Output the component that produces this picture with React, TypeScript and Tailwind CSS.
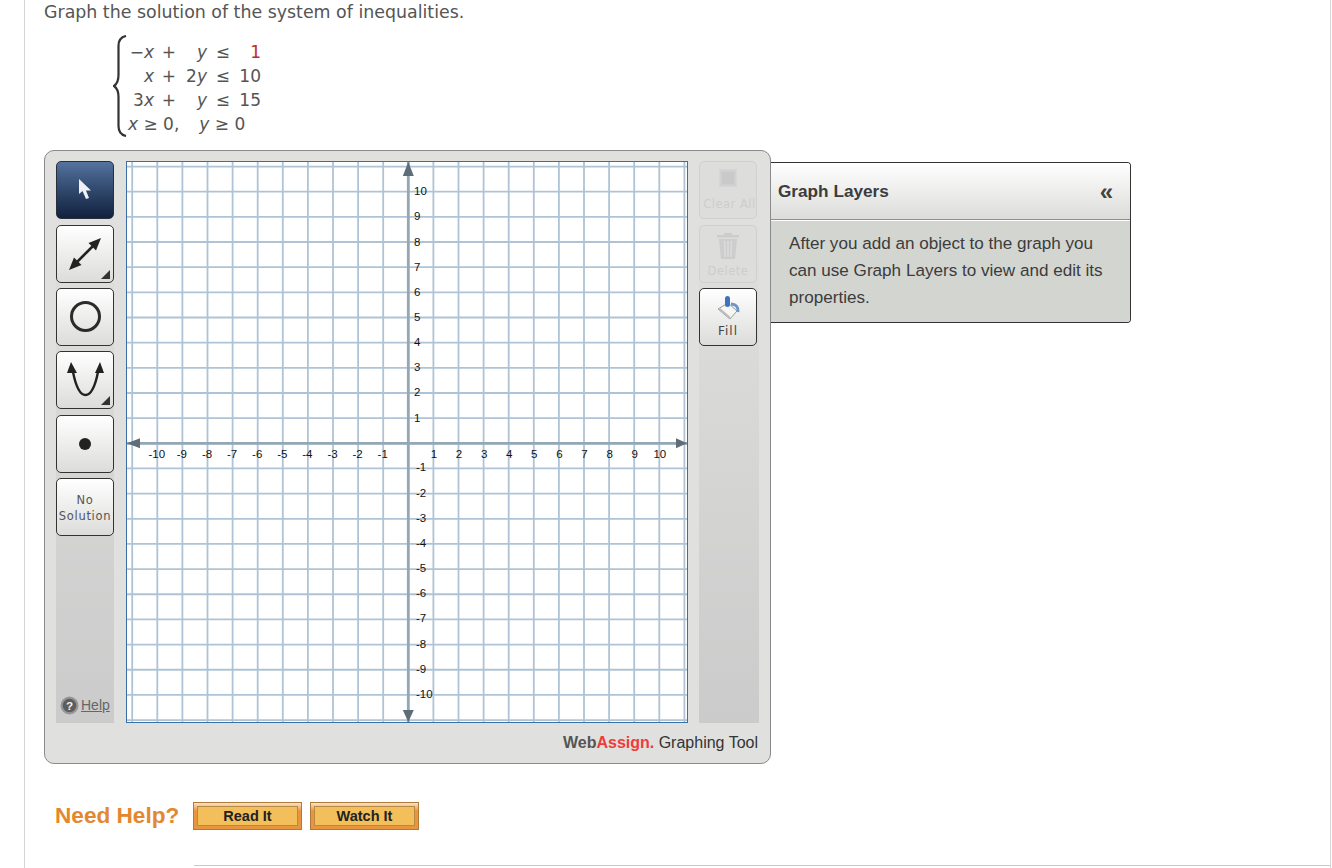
import React from "react";

const OX = 282.3;
const OY = 282.3;
const STEP_X = 25.1;
const STEP_Y = 25.16;
const range = Array.from({ length: 23 }, (_, i) => i - 11);
const labels = range.filter((n) => n !== 0 && Math.abs(n) <= 10);

function Graph() {
  return (
    <svg width={562} height={562} viewBox="0 0 562 562" className="block bg-white font-['Liberation_Sans',sans-serif]">
      {range.map((n) => (
        <g key={n} stroke="#aec3d5" strokeWidth={1.8}>
          <line x1={OX + n * STEP_X} x2={OX + n * STEP_X} y1={0} y2={562} />
          <line y1={OY - n * STEP_Y} y2={OY - n * STEP_Y} x1={0} x2={562} />
        </g>
      ))}
      <line x1={OX} x2={OX} y1={0} y2={562} stroke="#93a7b5" strokeWidth={2.8} />
      <line y1={OY} y2={OY} x1={0} x2={562} stroke="#93a7b5" strokeWidth={2.8} />
      <polygon points={`${OX},1 ${OX - 5.5},15 ${OX + 5.5},15`} fill="#5f6d78" />
      <polygon points={`${OX},561 ${OX - 5.5},549 ${OX + 5.5},549`} fill="#5f6d78" />
      <polygon points={`1,${OY} 14,${OY - 5} 14,${OY + 5}`} fill="#5f6d78" />
      <polygon points={`561,${OY} 550,${OY - 5} 550,${OY + 5}`} fill="#5f6d78" />
      <rect x={0.5} y={0.5} width={561} height={561} fill="none" stroke="#3b6ea5" />
      {labels.map((n) => (
        <text key={`x${n}`} x={OX + n * STEP_X + (n < 0 ? -0.5 : 0.5)} y={296.5} textAnchor="middle" fontSize={11.5} fill="#111">
          {n}
        </text>
      ))}
      {labels.map((n) => (
        <text key={`y${n}`} x={n > 0 ? 288 : 290} y={OY - n * STEP_Y + (n > 0 ? 3.5 : 3)} fontSize={11.5} fill="#111">
          {n}
        </text>
      ))}
    </svg>
  );
}

function Corner() {
  return (
    <svg width={9} height={9} viewBox="0 0 9 9" className="absolute right-[3px] bottom-[3px]">
      <polygon points="9,0 9,9 0,9" fill="#333" />
    </svg>
  );
}

function Tool({ children, active, dim, corner }: { children: React.ReactNode; active?: boolean; dim?: boolean; corner?: boolean }) {
  const look = active
    ? "border-[#2a2f3a] bg-gradient-to-b from-[#54739f] to-[#11223f]"
    : dim
      ? "border-[#d0d0d0] bg-[#dddddb]"
      : "border-[#333] bg-gradient-to-b from-white to-[#dcdcda]";
  return (
    <div className={`relative flex h-[58px] w-[58px] shrink-0 flex-col items-center justify-center rounded-[5px] border ${look}`}>
      {children}
      {corner && <Corner />}
    </div>
  );
}

function LineIcon() {
  return (
    <svg width={36} height={36} viewBox="0 0 36 36">
      <line x1={7} y1={29} x2={29} y2={7} stroke="#222" strokeWidth={2.6} />
      <polygon points="34,2 29,14.5 21.5,7" fill="#222" />
      <polygon points="2,34 7,21.5 14.5,29" fill="#222" />
    </svg>
  );
}

function ParabolaIcon() {
  return (
    <svg width={38} height={38} viewBox="0 0 38 38">
      <path d="M7 11 C10 26 14 34 19.5 34 C25 34 29 26 32 11" fill="none" stroke="#222" strokeWidth={2.4} />
      <polygon points="5,1 1,12 11,12" fill="#222" />
      <polygon points="34,1 29,12 38,12" fill="#222" />
    </svg>
  );
}

function Cursor() {
  return (
    <svg width={14} height={22} viewBox="0 0 14 22" className="mb-[3px]">
      <polygon points="1,1 1,16 4.5,13 8,21 11,20 8,12.5 13,12.5" fill="#eef2f7" />
    </svg>
  );
}

function ClearIcon() {
  return (
    <svg width={18} height={18} viewBox="0 0 18 18">
      <rect x={0.5} y={0.5} width={17} height={17} fill="#cfcfcf" stroke="#d6d6d6" strokeWidth={1.5} />
      <rect x={3} y={3} width={12} height={12} fill="#c9c9c9" />
    </svg>
  );
}

function TrashIcon() {
  return (
    <svg width={22} height={26} viewBox="0 0 22 26" className="mt-[4px]">
      <rect x={0} y={2} width={22} height={2.5} fill="#cdcdcd" />
      <rect x={7} y={0} width={8} height={2.5} fill="#cdcdcd" />
      <path d="M2 6 H20 L18 26 H4 Z" fill="#cdcdcd" />
      <path d="M7.5 8 L8.2 24 M11 8 V24 M14.5 8 L13.8 24" stroke="#dddddb" strokeWidth={1.4} />
    </svg>
  );
}

function FillIcon() {
  return (
    <svg width={24} height={24} viewBox="0 0 24 24">
      <polygon points="2,13 12,7 21,15 14,23" fill="#f6f6f4" stroke="#9a9a9a" strokeWidth={1} />
      <polygon points="2,13 14,23 14,20.5 4,12" fill="#bdbdbd" />
      <rect x={9} y={0} width={5} height={11} rx={2.5} fill="#3f73bd" />
      <path d="M15 8 C20 8 22.5 11 22 16" fill="none" stroke="#6d96c6" strokeWidth={3} />
    </svg>
  );
}

function HelpIcon() {
  return (
    <svg width={19} height={19} viewBox="0 0 18 18" className="-ml-[1px]">
      <circle cx={9} cy={9} r={8.5} fill="#959595" />
      <circle cx={9} cy={9} r={6.4} fill="#5d5d5d" />
      <text x={9} y={13} textAnchor="middle" fontSize={11} fontWeight={700} fill="#f2f2f2" className="font-['Liberation_Sans',sans-serif]">?</text>
    </svg>
  );
}

function Orange({ label }: { label: string }) {
  return (
    <div className="h-[28px] w-[109px] border border-[#ad7a3a] bg-gradient-to-b from-[#fbe3c6] from-0% to-[#e8953e] to-30% p-[3px]">
      <div className="flex h-full w-full items-center justify-center border border-[#b98a45] bg-[#f2bf5b] pt-[2px] font-['Liberation_Sans',sans-serif] text-[14.5px] font-bold text-[#222]">
        {label}
      </div>
    </div>
  );
}

function Brace() {
  return (
    <svg width={18} height={102} viewBox="0 0 18 102" className="shrink-0">
      <path d="M13 1 C8 2 5.5 5 5.5 11 L5.5 40 C5.5 46 4 49 1 51 C4 53 5.5 56 5.5 62 L5.5 91 C5.5 97 8 100 13 101" fill="none" stroke="#333" strokeWidth={2.2} />
    </svg>
  );
}

const V = ({ children }: { children: React.ReactNode }) => <i className="italic">{children}</i>;

function Equations() {
  const cell = "h-[24px] leading-[24px] text-right";
  return (
    <div className="ml-[69px] mt-[13px] flex h-[102px] items-start font-['DejaVu_Sans',sans-serif] text-[17px] text-[#555]">
      <Brace />
      <div className="-ml-[4px] mt-[5px] grid grid-cols-[27px_29px_24px_23px_31px]">
        <div className={cell}>−<V>x</V></div>
        <div className={`${cell} pr-[7px]`}>+</div>
        <div className={cell}><V>y</V></div>
        <div className={cell}>≤</div>
        <div className={`${cell} text-[#c4281c]`}>1</div>

        <div className={cell}><V>x</V></div>
        <div className={`${cell} pr-[7px]`}>+</div>
        <div className={cell}>2<V>y</V></div>
        <div className={cell}>≤</div>
        <div className={cell}>10</div>

        <div className={cell}>3<V>x</V></div>
        <div className={`${cell} pr-[7px]`}>+</div>
        <div className={cell}><V>y</V></div>
        <div className={cell}>≤</div>
        <div className={cell}>15</div>

        <div className="col-span-5 ml-[1px] h-[24px] whitespace-nowrap leading-[24px]">
          <V>x</V> ≥ 0,<span className="ml-[20px]"><V>y</V> ≥ 0</span>
        </div>
      </div>
    </div>
  );
}

export default function App() {
  return (
    <div className="h-[868px] w-[1332px] overflow-hidden bg-white">
      <div className="ml-[24px] flex h-[868px] w-[1307px] flex-col border-x border-[#d4d4d4] pl-[19px]">
        <div className="mt-[2px] h-[20px] font-['DejaVu_Sans',sans-serif] text-[17.4px] leading-[20px] text-[#555]">
          Graph the solution of the system of inequalities.
        </div>
        <Equations />
        <div className="mt-[13px] flex h-[614px] items-start">
          <div className="h-[614px] w-[727px] shrink-0 rounded-[10px] border border-[#8a8a8a] bg-[#e0e0de] pl-[11px] pt-[10px]">
            <div className="flex h-[562px] items-stretch">
              <div className="flex w-[58px] flex-col gap-[5.4px] bg-gradient-to-b from-[#e2e2e0] to-[#cbcbcb] pt-[0.2px]">
                <Tool active><Cursor /></Tool>
                <Tool corner><LineIcon /></Tool>
                <Tool>
                  <div className="h-[31px] w-[31px] rounded-full border-[3px] border-[#2b2b2b]" />
                </Tool>
                <Tool corner><ParabolaIcon /></Tool>
                <Tool>
                  <div className="h-[12px] w-[12px] rounded-full bg-[#222]" />
                </Tool>
                <Tool>
                  <span className="pt-[2px] text-center font-['DejaVu_Sans',sans-serif] text-[11.5px] leading-[16px] tracking-[0.7px] text-[#555]">No<br />Solution</span>
                </Tool>
                <div className="mb-[7px] mt-auto flex items-center gap-[2px] pl-[5px]">
                  <HelpIcon />
                  <span className="font-['Liberation_Sans',sans-serif] text-[14px] text-[#666] underline">Help</span>
                </div>
              </div>
              <div className="ml-[12px] mr-[11px] w-[562px] shrink-0">
                <Graph />
              </div>
              <div className="flex w-[60px] flex-col gap-[5.4px] bg-gradient-to-b from-[#e2e2e0] to-[#cbcbcb] pt-[0.2px]">
                <Tool dim>
                  <ClearIcon />
                  <span className="ml-[3px] mt-[10px] whitespace-nowrap font-['DejaVu_Sans',sans-serif] text-[11.5px] leading-[14px] tracking-[0.5px] text-[#cdcdcd]">Clear All</span>
                </Tool>
                <Tool dim>
                  <TrashIcon />
                  <span className="mt-[5px] font-['DejaVu_Sans',sans-serif] text-[11.5px] leading-[14px] tracking-[0.5px] text-[#cdcdcd]">Delete</span>
                </Tool>
                <Tool>
                  <FillIcon />
                  <span className="mt-[4px] font-['DejaVu_Sans',sans-serif] text-[12px] leading-[14px] tracking-[1px] text-[#444]">Fill</span>
                </Tool>
              </div>
            </div>
            <div className="mr-[12px] mt-[10px] text-right font-['Liberation_Sans',sans-serif] text-[16px] leading-[20px] text-[#333]">
              <span className="font-bold text-[#555]">Web</span>
              <span className="font-bold text-[#ee3b3b]">Assign.</span> Graphing Tool
            </div>
          </div>
          <div className="mt-[12px] h-[161px] w-[360px] shrink-0 overflow-hidden rounded-r-[4px] border border-l-0 border-[#333] font-['Liberation_Sans',sans-serif]">
            <div className="flex h-[57px] items-center justify-between border-b border-[#8f8f8f] bg-gradient-to-b from-white to-[#dcdcda] pl-[7px] pr-[17px] pt-[2px]">
              <span className="text-[17.2px] font-bold text-[#3c3c3c]">Graph Layers</span>
              <span className="text-[24px] font-bold leading-none text-[#444]">«</span>
            </div>
            <div className="h-[103px] border-t border-white bg-[#d3d5d1] pl-[18px] pr-[20px] pt-[9px] text-[17.1px] leading-[27px] text-[#3c3c3c]">
              After you add an object to the graph you can use Graph Layers to view and edit its properties.
            </div>
          </div>
        </div>
        <div className="ml-[11px] mt-[38px] flex h-[28px] items-center">
          <span className="w-[138px] font-['Liberation_Sans',sans-serif] text-[22.6px] font-bold leading-[28px] text-[#e3882f]">Need Help?</span>
          <div className="flex gap-[8px]">
            <Orange label="Read It" />
            <Orange label="Watch It" />
          </div>
        </div>
        <div className="ml-[150px] mt-[35px] h-[1px] shrink-0 bg-[#c8c8c8]" />
      </div>
    </div>
  );
}
